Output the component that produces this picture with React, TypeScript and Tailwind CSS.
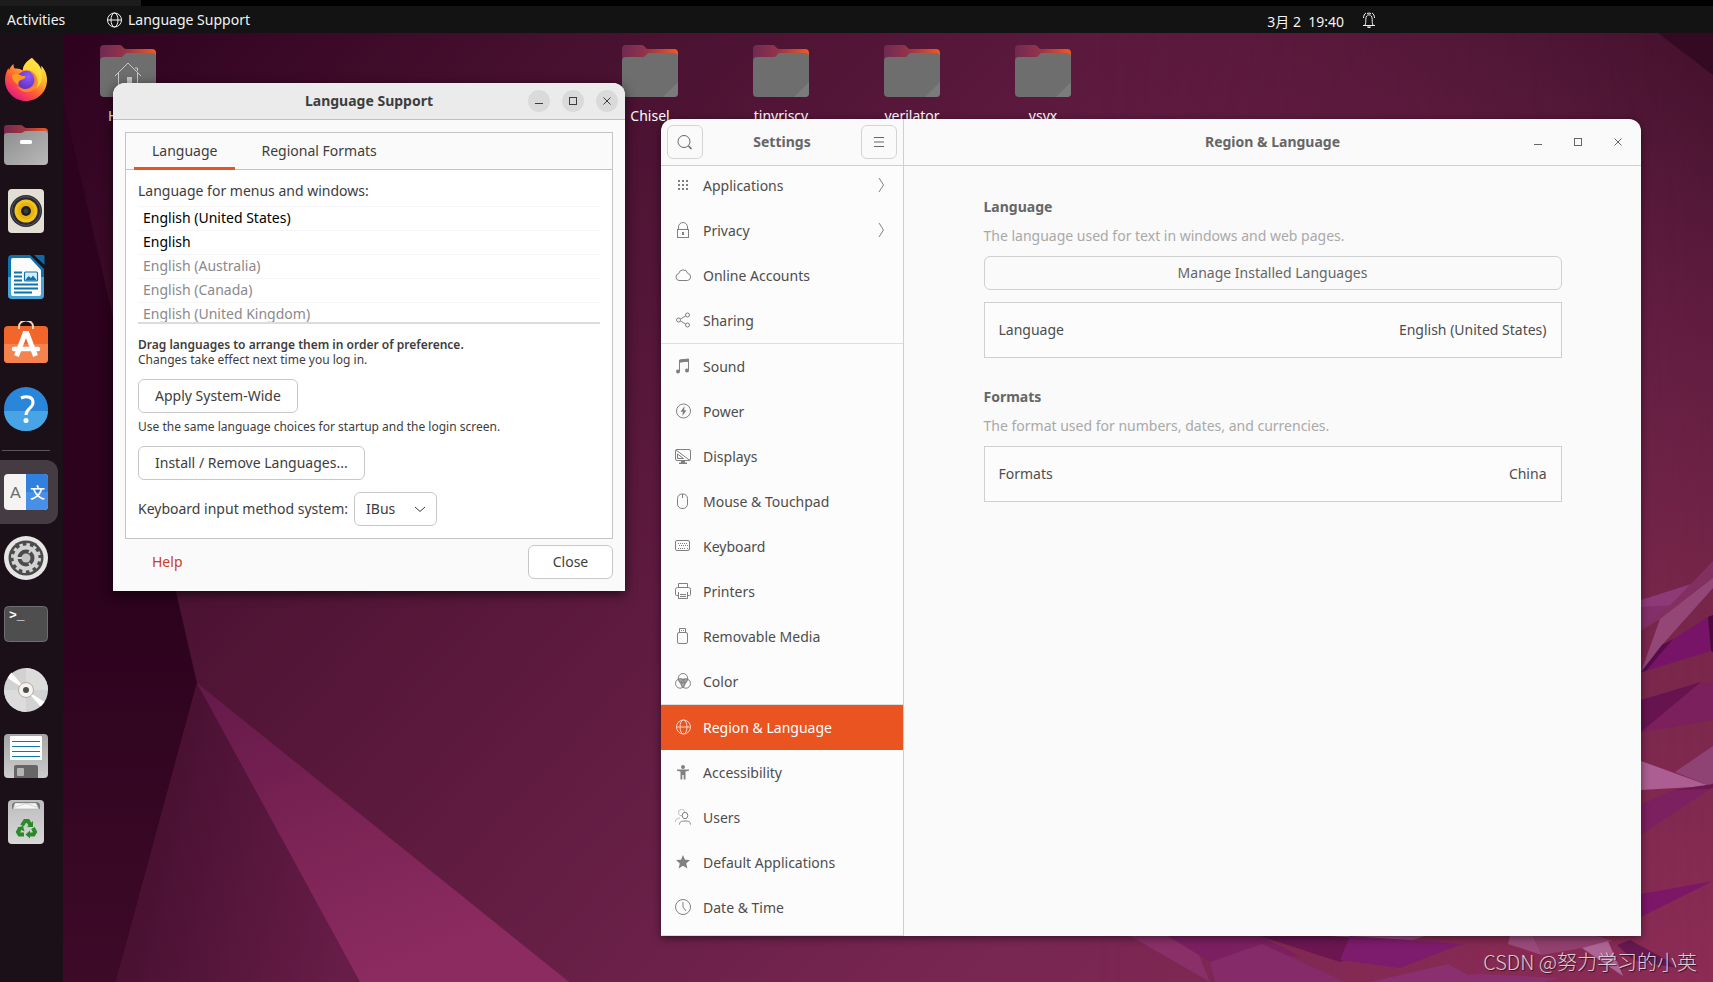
// App.tsx
import React, { useState } from "react";

const fontStack = "font-['Noto_Sans','Noto_Sans_CJK_SC',sans-serif]";

/* ---------- Wallpaper ---------- */

const facets: { points: string; fill: string }[] = [
	{ points: "1658,33 1713,75 1713,33", fill: "#340922" },
	{ points: "1641,600 1691,584 1670,606 1641,608", fill: "#8e3a78" },
	{ points: "1641,607 1672,605 1641,631", fill: "#83306a" },
	{ points: "1713,561 1713,581 1660,619 1641,631 1670,606 1691,584", fill: "#82305f" },
	{ points: "1713,578 1713,588 1662,645 1641,672 1660,619", fill: "#944676" },
	{ points: "1708,617 1711,651 1645,671 1641,672 1667,643", fill: "#781468" },
	{ points: "1641,672 1646,671 1673,639 1662,645", fill: "#560c4c" },
	{ points: "1708,617 1713,615 1713,652 1711,651", fill: "#4b0a3b" },
	{ points: "1641,700 1701,682 1641,733", fill: "#661350" },
	{ points: "1701,682 1713,684 1713,720 1641,732", fill: "#7b1f5d" },
	{ points: "1641,761 1710,786 1641,790", fill: "#ac5e92" },
	{ points: "1713,746 1713,783 1710,786 1675,772", fill: "#8f4374" },
	{ points: "1673,790 1713,784 1713,788 1700,791", fill: "#6a1a50" },
	{ points: "1641,805 1673,790 1710,789 1641,835", fill: "#7d2060" },
	{ points: "1641,894 1713,881 1641,917", fill: "#7c1768" },
	{ points: "1130,936 1168,936 1196,948 1210,982 1172,960", fill: "#8a2f68" },
	{ points: "1168,936 1260,936 1300,956 1210,962", fill: "#7c1f60" },
	{ points: "1210,962 1262,944 1345,982 1215,982", fill: "#862b6a" },
	{ points: "1260,936 1330,936 1400,941 1340,962", fill: "#6b1650" },
	{ points: "1330,936 1425,936 1413,940", fill: "#96497c" },
	{ points: "1350,936 1462,944 1400,968 1340,960", fill: "#7d1c6c" },
	{ points: "1370,982 1448,964 1468,975 1480,974 1560,978 1543,982", fill: "#8a3070" },
	{ points: "1510,936 1533,936 1542,955 1508,944", fill: "#9a4b7c" },
	{ points: "1533,936 1597,936 1613,941 1582,948 1542,955", fill: "#92406e" },
	{ points: "1582,948 1608,941 1623,976", fill: "#ad6595" },
	{ points: "1630,940 1667,960 1677,968 1633,960 1617,945", fill: "#661850" },
];

const Wallpaper: React.FC = () => (
	<svg
		className="absolute inset-0 h-full w-full"
		viewBox="0 0 1713 982"
		preserveAspectRatio="none"
		aria-hidden="true"
	>
		<defs>
			<linearGradient id="base" gradientUnits="userSpaceOnUse" x1="120" y1="0" x2="1300" y2="1100">
				<stop offset="0" stopColor="#2f0320" />
				<stop offset="0.22" stopColor="#47102f" />
				<stop offset="0.5" stopColor="#5f1b40" />
				<stop offset="0.8" stopColor="#782652" />
				<stop offset="1" stopColor="#7e2853" />
			</linearGradient>
			<linearGradient id="right" gradientUnits="userSpaceOnUse" x1="0" y1="33" x2="0" y2="982">
				<stop offset="0" stopColor="#43112c" />
				<stop offset="0.3" stopColor="#5f1c3f" />
				<stop offset="0.6" stopColor="#762649" />
				<stop offset="1" stopColor="#8c2c55" />
			</linearGradient>
			<linearGradient id="fade" x1="0" x2="1" y1="0" y2="0">
				<stop offset="0" stopColor="#000" />
				<stop offset="1" stopColor="#fff" />
			</linearGradient>
			<mask id="rightMask">
				<rect x="1100" y="0" width="613" height="982" fill="url(#fade)" />
			</mask>
			<linearGradient id="ray" x1="0" y1="0" x2="0.5" y2="1">
				<stop offset="0" stopColor="#64194a" />
				<stop offset="0.6" stopColor="#7e2556" />
				<stop offset="1" stopColor="#8c2b60" />
			</linearGradient>
			<linearGradient id="lowLeft" x1="0" y1="0.4" x2="1" y2="0.7">
				<stop offset="0" stopColor="#430e2e" />
				<stop offset="1" stopColor="#671d47" />
			</linearGradient>
			<linearGradient id="dark" x1="0" y1="0" x2="0" y2="1">
				<stop offset="0" stopColor="#2e0220" />
				<stop offset="0.6" stopColor="#2c021d" />
				<stop offset="1" stopColor="#3d0a28" />
			</linearGradient>
		</defs>
		<rect width="1713" height="982" fill="url(#base)" />
		<rect x="1100" width="613" height="982" fill="url(#right)" mask="url(#rightMask)" />
		<polygon points="0,0 40,0 197,683 116,982 0,982" fill="url(#dark)" />
		<polygon points="197,683 360,982 116,982" fill="url(#lowLeft)" />
		<polygon points="197,683 569,982 360,982" fill="url(#ray)" />
		{facets.map((f) => (
			<polygon key={f.points} points={f.points} fill={f.fill} />
		))}
	</svg>
);

/* ---------- Dock icons, all on a 44px grid ---------- */

const FirefoxIcon = () => (
	<svg width="44" height="44" viewBox="0 0 44 44">
		<defs>
			<linearGradient id="ffBody" x1="0.85" y1="0.05" x2="0.2" y2="0.95">
				<stop offset="0" stopColor="#fff44f" />
				<stop offset="0.35" stopColor="#ffb02a" />
				<stop offset="0.65" stopColor="#ff5a36" />
				<stop offset="1" stopColor="#e31587" />
			</linearGradient>
			<radialGradient id="ffGlobe" cx="0.6" cy="0.3" r="0.8">
				<stop offset="0" stopColor="#9059ff" />
				<stop offset="1" stopColor="#5b2bb5" />
			</radialGradient>
		</defs>
		<path
			d="M28 1c2 3 6 5 8 9 .6 1 1 2 1.200 3 .3-1.500.2-3-.2-4.300C41 12 43 18 43 23c0 12-9.500 21-21 21S1 34.500 1 23c0-5 1.500-9 3.500-12 .1 1 .2 1.500.6 2.300C6 10.500 7.500 8.500 9.500 7c0 2 .3 3.500 1.200 4.600 3-.6 6 .2 8 2C19 9 23 3.500 28 1z"
			fill="url(#ffBody)"
		/>
		<circle cx="22.500" cy="23" r="9.500" fill="url(#ffGlobe)" />
		<path d="M8 18c3-2 7-1 9 .5 2 .8 5 .3 4.500 1.700-1 2-4 2-5.500 3.300-1.500 1-2 2.500-1.500 4.500C11 26 7.500 22 8 18z" fill="#ff9a1f" />
		<path d="M24 13c5 0 9 4 10 9 1 7-4 13-11 13-4 0-8-2-10-6 5 4 11 4 15 0 4-4.500 3-11-4-16z" fill="#ff8a2b" opacity="0.85" />
		<path d="M28 1c-5 3-9 7-9 12 6-1 12 2 14 8 1.500 4 1 8-1 11 6-5 8-13 4-22-2-4-6-6-8-9z" fill="#ffdf3d" opacity="0.85" />
	</svg>
);

const FilesIcon = () => (
	<svg width="44" height="44" viewBox="0 0 44 44">
		<defs>
			<linearGradient id="fBack" x1="0" x2="1">
				<stop offset="0" stopColor="#75294f" />
				<stop offset="0.5" stopColor="#a3373f" />
				<stop offset="1" stopColor="#f05a20" />
			</linearGradient>
			<linearGradient id="fFront" x1="0" y1="0" x2="1" y2="1">
				<stop offset="0" stopColor="#8e8e8e" />
				<stop offset="1" stopColor="#b9b9b9" />
			</linearGradient>
		</defs>
		<path d="M0 14V5a3 3 0 0 1 3-3h14c2 0 3 3 5 3h18a4 4 0 0 1 4 4v8H0z" fill="url(#fBack)" />
		<path d="M0 13a3 3 0 0 1 3-3h14c2 0 3-2 5-2h18a4 4 0 0 1 4 4v26a4 4 0 0 1-4 4H4a4 4 0 0 1-4-4z" fill="url(#fFront)" />
		<rect x="16" y="17" width="12" height="4" rx="1.500" fill="#fff" />
	</svg>
);

const RhythmboxIcon = () => (
	<svg width="44" height="44" viewBox="0 0 44 44">
		<rect x="4" y="0" width="36" height="44" rx="4" fill="#e4dfd5" />
		<circle cx="22" cy="22" r="16" fill="#2b2a33" />
		<circle cx="22" cy="22" r="14.500" fill="none" stroke="#55555f" strokeWidth="1" />
		<circle cx="22" cy="22" r="11.500" fill="#f2c31b" />
		<circle cx="22" cy="22" r="8.500" fill="#dda90f" opacity="0.6" />
		<circle cx="22" cy="22" r="5" fill="#1f1f1f" />
		<circle cx="22" cy="22" r="2.500" fill="#3c3c3c" />
	</svg>
);

const WriterIcon = () => (
	<svg width="44" height="44" viewBox="0 0 44 44">
		<path d="M8 0h18l14 14v26a4 4 0 0 1-4 4H8a4 4 0 0 1-4-4V4a4 4 0 0 1 4-4z" fill="#0c73b0" />
		<path d="M4 22h36v18a4 4 0 0 1-4 4H8a4 4 0 0 1-4-4z" fill="#48a3d6" />
		<path d="M9 3h17l11 12v24a2 2 0 0 1-2 2H9a2 2 0 0 1-2-2V5a2 2 0 0 1 2-2z" fill="#fbfbfb" />
		<path d="M30 0h9a1.500 1.500 0 0 1 1.500 1.500V10z" fill="#0d6aa3" />
		<path d="M10 17.500h8M10 21.500h8M10 25.500h8M10 29.500h24M10 33.500h24M10 37.500h18" stroke="#0c73b0" strokeWidth="1.800" />
		<rect x="20.500" y="17" width="13" height="9" rx="1" fill="#d9ecf8" stroke="#0c73b0" strokeWidth="1.200" />
		<path d="M21 25.500l3.500-4.500 2.500 2 2-2.500 4 5z" fill="#0c73b0" />
	</svg>
);

const SoftwareIcon = () => (
	<svg width="44" height="44" viewBox="0 0 44 44">
		<rect x="0" y="5" width="44" height="37" rx="4" fill="#f2662c" />
		<path d="M0 23h44v15a4 4 0 0 1-4 4H4a4 4 0 0 1-4-4z" fill="#f58350" />
		<path d="M15 8V5.500a7 6 0 0 1 14 0V8" fill="none" stroke="#f6d9a8" strokeWidth="2" />
		<path d="M12.500 35L21 12.500h2L31.500 35" fill="none" stroke="#fff" strokeWidth="5" />
		<path d="M10 28h24" stroke="#fff" strokeWidth="4.500" strokeLinecap="round" />
	</svg>
);

const HelpIcon = () => (
	<svg width="44" height="44" viewBox="0 0 44 44">
		<circle cx="22" cy="22" r="22" fill="#2a86d8" />
		<path d="M0 24a22 20 0 0 0 44 0z" fill="#49a4e6" />
		<path d="M17 11c7-3 12-.5 12 4.500 0 6-7 6-7 12.500" fill="none" stroke="#fff" strokeWidth="3" />
		<circle cx="22" cy="33.500" r="2.500" fill="#fff" />
	</svg>
);

const TranslateIcon = () => (
	<svg width="44" height="44" viewBox="0 0 44 44">
		<rect x="0" y="4" width="44" height="36" rx="4" fill="#f5f4f2" />
		<path d="M22 4h18a4 4 0 0 1 4 4v14H22z" fill="#3180e0" />
		<path d="M22 22h22v14a4 4 0 0 1-4 4H22z" fill="#4790e6" />
		<text x="11.500" y="28" fontSize="16" textAnchor="middle" fill="#6d6d6d" fontFamily="Lato, sans-serif">A</text>
		<text x="33.500" y="28" fontSize="15" fontWeight="500" textAnchor="middle" fill="#fff" fontFamily="'Noto Sans CJK SC', sans-serif">文</text>
	</svg>
);

const SettingsIcon = () => (
	<svg width="44" height="44" viewBox="0 0 44 44">
		<circle cx="22" cy="22" r="22" fill="#e6e6e4" />
		<circle cx="22" cy="22" r="17.500" fill="#4b4b4b" />
		<circle cx="22" cy="22" r="13.500" fill="none" stroke="#d3d3d3" strokeWidth="3" strokeDasharray="3.530 3.538" />
		<circle cx="22" cy="22" r="10.500" fill="none" stroke="#d3d3d3" strokeWidth="4" />
		<circle cx="22" cy="22" r="4.500" fill="#c4c4c4" />
		<path d="M12 22h6M25 17l3-5M25 27l3 5" stroke="#d3d3d3" strokeWidth="2" />
	</svg>
);

const TerminalIcon = () => (
	<svg width="44" height="44" viewBox="0 0 44 44">
		<rect x="0.500" y="4.500" width="43" height="35" rx="4" fill="#4e4e4e" stroke="#6e6e6e" />
		<text x="5" y="17" fontSize="13" fontWeight="700" fill="#fff" fontFamily="'Liberation Mono', monospace">&gt;_</text>
	</svg>
);

const DiscIcon = () => (
	<svg width="44" height="44" viewBox="0 0 44 44">
		<circle cx="22" cy="22" r="22" fill="#d2d2d2" />
		<path d="M22 22V0a22 22 0 0 1 22 22z" fill="#dcdcdc" />
		<path d="M22 22V44a22 22 0 0 1-22-22z" fill="#dcdcdc" />
		<path d="M22 22L3.500 10a22 22 0 0 1 4-5.500z" fill="#fff" />
		<path d="M22 22l18.500 12a22 22 0 0 1-4 4.500z" fill="#fff" />
		<circle cx="22" cy="22" r="7.500" fill="#f5f3ef" stroke="#b5aca0" />
		<circle cx="22" cy="22" r="3" fill="#4d4d4d" />
	</svg>
);

const FloppyIcon = () => (
	<svg width="44" height="44" viewBox="0 0 44 44">
		<defs>
			<linearGradient id="flop" x1="0" y1="0" x2="0" y2="1">
				<stop offset="0" stopColor="#a5a5a5" />
				<stop offset="1" stopColor="#cdcdcd" />
			</linearGradient>
		</defs>
		<rect width="44" height="44" rx="4" fill="url(#flop)" />
		<rect x="6" y="2" width="32" height="24" rx="1" fill="#fff" />
		<path d="M8 7.500h28M8 12.500h28M8 17.500h28M8 22.500h28" stroke="#0b7aa8" strokeWidth="1.200" />
		<path d="M10 33a2 2 0 0 1 2-2h20a2 2 0 0 1 2 2v11H10z" fill="#666" />
		<rect x="13" y="34" width="7" height="8" rx="1" fill="#b4b4b4" />
	</svg>
);

const TrashIcon = () => (
	<svg width="44" height="44" viewBox="0 0 44 44">
		<defs>
			<linearGradient id="bin" x1="0" y1="0" x2="0" y2="1">
				<stop offset="0" stopColor="#bdbdbd" />
				<stop offset="1" stopColor="#d8d8d8" />
			</linearGradient>
		</defs>
		<rect x="4" width="36" height="44" rx="4" fill="url(#bin)" />
		<path d="M8 9V6a4 4 0 0 1 4-4h20a4 4 0 0 1 4 4v3z" fill="#777" />
		<path d="M9 9l2-6h21l3 6z" fill="#f7f7f7" stroke="#aaa" strokeWidth="0.600" />
		<path d="M10 7.500l12-4 12 4" fill="none" stroke="#bbb" strokeWidth="0.600" />
		<g fill="none" stroke="#2a8a26" strokeWidth="4">
			<path d="M18 25.500l3-4.500h3l2.500 4" />
			<path d="M29 28l2 4-1.500 2.500H24" />
			<path d="M20 34.500h-4.500L14 32l2-3.500" />
		</g>
		<path d="M29 21v6h-6zM26 30.500v8l-4.500-4zM13 27.500l6-1.500 1.500 5.500z" fill="#2a8a26" />
	</svg>
);

interface DockItem {
	name: string;
	Icon: React.FC;
	active?: boolean;
}

const pinnedApps: DockItem[] = [
	{ name: "Firefox", Icon: FirefoxIcon },
	{ name: "Files", Icon: FilesIcon },
	{ name: "Rhythmbox", Icon: RhythmboxIcon },
	{ name: "LibreOffice Writer", Icon: WriterIcon },
	{ name: "Ubuntu Software", Icon: SoftwareIcon },
	{ name: "Help", Icon: HelpIcon },
];

const runningApps: DockItem[] = [
	{ name: "Language Support", Icon: TranslateIcon, active: true },
	{ name: "Settings", Icon: SettingsIcon },
	{ name: "Terminal", Icon: TerminalIcon },
	{ name: "Disc", Icon: DiscIcon },
	{ name: "Floppy Disk", Icon: FloppyIcon },
	{ name: "Trash", Icon: TrashIcon },
];

const DockButton: React.FC<DockItem> = ({ name, Icon, active }) => (
	<button
		aria-label={name}
		className={`flex h-16 w-[58px] shrink-0 items-center rounded-r-xl pl-1 ${active ? "bg-[#453b42]" : ""}`}
	>
		<Icon />
	</button>
);

const Dock: React.FC = () => (
	<nav aria-label="Dock" className="relative flex w-[63px] shrink-0 flex-col gap-0.5 bg-[#1b1017] pt-3.5">
		{pinnedApps.map((app) => (
			<DockButton key={app.name} {...app} />
		))}
		<div className="flex h-[15px] shrink-0 items-center pl-0.5">
			<div className="h-px w-12 bg-[#5d555a]" />
		</div>
		{runningApps.map((app) => (
			<DockButton key={app.name} {...app} />
		))}
	</nav>
);

/* ---------- Symbolic icons, 16px grid ---------- */

const Sym: React.FC<{ children: React.ReactNode; className?: string }> = ({ children, className = "" }) => (
	<svg
		width="16"
		height="16"
		viewBox="0 0 16 16"
		fill="none"
		stroke="currentColor"
		strokeWidth="1"
		aria-hidden="true"
		className={`shrink-0 ${className}`}
	>
		{children}
	</svg>
);

const globe = (
	<>
		<circle cx="8.500" cy="8" r="7" />
		<ellipse cx="8.500" cy="8" rx="3.500" ry="7" />
		<path d="M1.500 8h14" />
	</>
);

const icons: Record<string, React.ReactNode> = {
	Applications: (
		<g fill="currentColor" stroke="none">
			{[3, 7, 11].map((y) =>
				[3, 7, 11].map((x) => <rect key={`${x}-${y}`} x={x} y={y} width="2" height="2" />)
			)}
		</g>
	),
	Privacy: (
		<>
			<rect x="2.500" y="7.500" width="11" height="8" />
			<path d="M3.500 7.500V5a4.500 4.500 0 0 1 9 0v2.500" />
			<rect x="7" y="10" width="2" height="3" fill="currentColor" stroke="none" />
		</>
	),
	"Online Accounts": <path d="M4 13.500a3.500 3.500 0 0 1-.3-6.900 4.600 4.600 0 0 1 9-.2A3.600 3.600 0 0 1 12.500 13.500z" />,
	Sharing: (
		<>
			<circle cx="3.500" cy="8" r="2" />
			<circle cx="12.500" cy="3" r="2" />
			<circle cx="12.500" cy="13" r="2" />
			<path d="M5.300 7l5.400-3M5.300 9l5.400 3" />
		</>
	),
	Sound: (
		<>
			<path d="M4.500 13V2.500l9-1V12M4.500 4l9-1" />
			<path d="M4.500 2l9-1v2l-9 1z" fill="currentColor" />
			<circle cx="3" cy="13.500" r="2" fill="currentColor" stroke="none" />
			<circle cx="12" cy="12.500" r="2" fill="currentColor" stroke="none" />
		</>
	),
	Power: (
		<>
			<circle cx="8.500" cy="8" r="7" />
			<path d="M9.500 3L5.500 8.800h2.300L7.500 13l4-5.800H9.200z" fill="currentColor" stroke="none" />
		</>
	),
	Displays: (
		<>
			<rect x="0.500" y="1.500" width="15" height="11" rx="1.500" />
			<path d="M1 2l14 10.500M2.500 6v4.500h6z" />
			<path d="M6 13h4v1.500h2v1.500H4v-1.500h2z" fill="currentColor" stroke="none" />
		</>
	),
	"Mouse & Touchpad": (
		<>
			<rect x="2.500" y="1" width="10" height="14.500" rx="4.500" />
			<path d="M7.500 1v4" />
		</>
	),
	Keyboard: (
		<>
			<rect x="0.500" y="2.500" width="14" height="10" rx="1.500" />
			<path d="M3 5.500h10M4 7.500h9M3 10.500h1M5 10.500h6M12 10.500h1" strokeDasharray="1 1" />
		</>
	),
	Printers: (
		<>
			<path d="M3.500 4.500v-4h9v4M3 12.500H1.500a1 1 0 0 1-1-1v-5a2 2 0 0 1 2-2h11a2 2 0 0 1 2 2v5a1 1 0 0 1-1 1H13" />
			<path d="M3.500 9v6.500h9V9M5 11.500h6M5 13.500h6" />
		</>
	),
	"Removable Media": (
		<>
			<rect x="2.500" y="4.500" width="10" height="11" rx="1.500" />
			<path d="M4.500 4V.5h6V4M6 2.500h1M8 2.500h1" />
		</>
	),
	Color: (
		<>
			<path d="M3 5.500h10c0 3-1.500 4.500-2.500 5.500-.5 2-1.500 3-2.500 4-1-1-2-2-2.500-4C4.500 10 3 8.500 3 5.500z" fill="currentColor" opacity="0.700" stroke="none" />
			<circle cx="8" cy="5.200" r="4.700" />
			<circle cx="5.200" cy="10.500" r="4.700" />
			<circle cx="10.800" cy="10.500" r="4.700" />
		</>
	),
	"Region & Language": globe,
	Accessibility: (
		<g fill="currentColor" stroke="none">
			<circle cx="8" cy="3" r="2" />
			<path d="M2 5.500h12v1.200l-3.500.8V15.500H8.700V11H7.300v4.500H5.500V7.500L2 6.700z" />
		</g>
	),
	Users: (
		<>
			<g opacity="0.500">
				<path d="M7.500 6.500A3 3.200 0 1 1 9.500 3M.5 13c0-2.500 1.500-4 4.500-4" />
			</g>
			<ellipse cx="10" cy="6.500" rx="2.800" ry="3.200" />
			<path d="M4.500 15.500c0-2.500 1.500-3.500 5.500-3.500s5.500 1 5.500 3.500" />
		</>
	),
	"Default Applications": (
		<path d="M8 1l2 4.700 5 .4-3.800 3.300 1.200 5L8 11.700 3.600 14.400l1.200-5L1 6.100l5-.4z" fill="currentColor" stroke="none" />
	),
	"Date & Time": (
		<>
			<circle cx="8" cy="8" r="7.500" />
			<path d="M8 3v5l3 4" />
		</>
	),
};

const MinimizeGlyph = () => (
	<Sym>
		<path d="M4 10.500h8" />
	</Sym>
);
const MaximizeGlyph = () => (
	<Sym>
		<rect x="4.500" y="4.500" width="7" height="7" />
	</Sym>
);
const CloseGlyph = () => (
	<Sym>
		<path d="M4.500 4.500l7 7M11.500 4.500l-7 7" />
	</Sym>
);

const windowControls = [
	{ label: "Minimize", Glyph: MinimizeGlyph },
	{ label: "Maximize", Glyph: MaximizeGlyph },
	{ label: "Close window", Glyph: CloseGlyph },
];

/* ---------- Top bar ---------- */

const TopBar: React.FC = () => (
	<header className="relative z-10 shrink-0">
		<div className="h-1.5 bg-black">
			<div className="h-full w-[141px] bg-[#1c1c1c]" />
		</div>
		<div className="flex h-[27px] items-center bg-[#131313] pl-[7px] text-sm text-[#f2f2f2]">
			<button className="w-[99px] text-left">Activities</button>
			<button className="flex items-center gap-1.5">
				<Sym>{globe}</Sym>
				Language Support
			</button>
			<button className="mr-[17px] ml-auto pt-1 whitespace-pre">{"3月 2  19:40"}</button>
			<button aria-label="Notifications" className="mr-[336px]">
				<Sym>
					<path d="M2 13.500h12M4 13c.8-1.500.8-3 .8-5.500C4.800 4.500 6 2.800 8 2.800s3.200 1.700 3.200 4.700c0 2.500 0 4 .8 5.500M2.500 6c0-2.500 1-4 2.500-5M13.500 6c0-2.500-1-4-2.500-5M6 1.500a4 3 0 0 1 4 0" />
					<path d="M6 14.500h4a2 1.500 0 0 1-4 0z" fill="currentColor" stroke="none" />
				</Sym>
			</button>
		</div>
	</header>
);

/* ---------- Desktop folders ---------- */

const DesktopFolder: React.FC<{ name: string; home?: boolean; className: string }> = ({ name, home, className }) => (
	<div className={`absolute top-3 flex w-24 flex-col items-center gap-[9px] text-sm text-white ${className}`}>
		<svg width="56" height="52" viewBox="0 0 56 52" className="shrink-0" aria-hidden="true">
			<defs>
				<linearGradient id="deskBack" x1="0" x2="1">
					<stop offset="0" stopColor="#6f2a52" />
					<stop offset="0.450" stopColor="#95344a" />
					<stop offset="1" stopColor="#f05a22" />
				</linearGradient>
			</defs>
			<path d="M0 16V4a4 4 0 0 1 4-4h16c2.500 0 3.500 4 6 4h26a4 4 0 0 1 4 4v10H0z" fill="url(#deskBack)" />
			<path d="M0 16a4 4 0 0 1 4-4h18l4-4h26a4 4 0 0 1 4 4v36a4 4 0 0 1-4 4H4a4 4 0 0 1-4-4z" fill="#6e6e6e" />
			<path d="M56 37v11a4 4 0 0 1-4 4H41z" fill="#7b7b7b" />
			{home && (
				<path d="M15 31l13-13 13 13M18.500 28v16M37.500 28v16M35 23h2.500v3" fill="none" stroke="#c9c9c9" />
			)}
			{home && <rect x="27" y="32" width="5" height="10" fill="#c9c9c9" />}
		</svg>
		<span>{name}</span>
	</div>
);

/* ---------- Language Support window ---------- */

const languages = [
	{ name: "English (United States)", enabled: true },
	{ name: "English", enabled: true },
	{ name: "English (Australia)", enabled: false },
	{ name: "English (Canada)", enabled: false },
	{ name: "English (United Kingdom)", enabled: false },
];

const LanguageSupport: React.FC = () => {
	const [tab, setTab] = useState("Language");

	return (
		<section
			aria-label="Language Support"
			className="absolute top-[50px] left-[50px] w-[512px] rounded-t-xl bg-[#fafafa] text-sm text-[#3d3d3d] shadow-[0_3px_12px_rgba(0,0,0,0.65)]"
		>
			<div className="relative flex h-[37px] items-center justify-end gap-3 rounded-t-xl border-b border-[#c0bfbf] bg-[#ebebeb] pr-[7px]">
				<h1 className="absolute inset-x-0 text-center font-bold">Language Support</h1>
				{windowControls.map(({ label, Glyph }) => (
					<button
						key={label}
						aria-label={label}
						className="relative flex size-[22px] items-center justify-center rounded-full bg-[#dadada]"
					>
						<Glyph />
					</button>
				))}
			</div>

			<div className="px-3 pt-3 pb-3">
				<div className="border border-[#c4c4c4] bg-white">
					<div role="tablist" className="flex h-[37px] border-b border-[#c4c4c4] bg-[#fafafa] px-2">
						{["Language", "Regional Formats"].map((name) => (
							<button
								key={name}
								role="tab"
								aria-selected={tab === name}
								onClick={() => setTab(name)}
								className={`-mb-px border-b-3 px-[18px] pt-0.5 not-first:ml-2 ${
									tab === name ? "border-[#e95420]" : "border-transparent"
								}`}
							>
								{name}
							</button>
						))}
					</div>

					<div className="flex flex-col items-start px-3 pt-[11px] pb-3">
						<p className="leading-5">Language for menus and windows:</p>
						<ul className="mt-[5px] h-[118px] w-full overflow-hidden border-b-2 border-[#dcdcdc]">
							{languages.map(({ name, enabled }) => (
								<li
									key={name}
									className={`h-6 border-t border-[#f5f5f5] pl-[5px] leading-[22px] ${enabled ? "text-black" : "text-[#8a8a8a]"}`}
								>
									{name}
								</li>
							))}
						</ul>
						<p className="mt-[13px] text-xs leading-[15px] font-semibold">
							Drag languages to arrange them in order of preference.
						</p>
						<p className="text-xs leading-[15px]">Changes take effect next time you log in.</p>
						<button className="mt-3 h-[34px] rounded-md border border-[#c8c8c8] bg-white px-4">
							Apply System-Wide
						</button>
						<p className="mt-1.5 text-xs leading-[15px]">
							Use the same language choices for startup and the login screen.
						</p>
						<button className="mt-3 h-[34px] rounded-md border border-[#c8c8c8] bg-white px-4">
							Install / Remove Languages...
						</button>
						<div className="mt-3 flex items-center gap-1.5">
							<label htmlFor="input-method">Keyboard input method system:</label>
							<div className="relative">
								<select
									id="input-method"
									defaultValue="IBus"
									className="h-[34px] w-[83px] appearance-none rounded-md border border-[#c8c8c8] bg-white pl-[11px]"
								>
									<option>IBus</option>
								</select>
								<Sym className="pointer-events-none absolute top-[9px] right-[9px]">
									<path d="M3 6l5 4.500L13 6" />
								</Sym>
							</div>
						</div>
					</div>
				</div>

				<div className="mt-1.5 flex items-center justify-between pl-[27px]">
					<a href="#help" className="text-[#c7401b]">
						Help
					</a>
					<button className="h-[34px] w-[85px] rounded-md border border-[#c8c8c8] bg-white">Close</button>
				</div>
			</div>
		</section>
	);
};

/* ---------- Settings window ---------- */

const panels = [
	{ name: "Applications", submenu: true },
	{ name: "Privacy", submenu: true },
	{ name: "Online Accounts" },
	{ name: "Sharing", divider: true },
	{ name: "Sound" },
	{ name: "Power" },
	{ name: "Displays" },
	{ name: "Mouse & Touchpad" },
	{ name: "Keyboard" },
	{ name: "Printers" },
	{ name: "Removable Media" },
	{ name: "Color", divider: true },
	{ name: "Region & Language" },
	{ name: "Accessibility" },
	{ name: "Users" },
	{ name: "Default Applications" },
	{ name: "Date & Time" },
];

const SettingRow: React.FC<{ label: string; value: string }> = ({ label, value }) => (
	<button className="flex h-14 w-full items-center justify-between border border-[#d0d0d0] bg-[#fcfcfc] px-3.5 text-[#4d4d4d]">
		<span>{label}</span>
		<span>{value}</span>
	</button>
);

const Settings: React.FC = () => {
	const [selected, setSelected] = useState("Region & Language");

	return (
		<section
			aria-label="Settings"
			className="absolute top-[86px] right-[72px] bottom-[46px] left-[598px] flex overflow-hidden rounded-t-xl bg-[#fafafa] text-sm text-[#666] shadow-[0_2px_8px_rgba(0,0,0,0.5)]"
		>
			<aside className="flex w-[243px] shrink-0 flex-col border-r border-[#cfcfcf]">
				<div className="flex h-[47px] shrink-0 items-center justify-between border-b border-[#cfcfcf] px-1.5">
					<button
						aria-label="Search"
						className="flex h-[34px] w-9 items-center justify-center rounded-md border border-[#d4d4d4]"
					>
						<Sym>
							<circle cx="7" cy="7.500" r="6" />
							<path d="M11.500 12l3 3" strokeWidth="1.500" />
						</Sym>
					</button>
					<h2 className="font-bold">Settings</h2>
					<button
						aria-label="Menu"
						className="flex h-[34px] w-9 items-center justify-center rounded-md border border-[#d4d4d4]"
					>
						<Sym>
							<path d="M3 3.500h10M3 8h10M3 12.500h10" />
						</Sym>
					</button>
				</div>
				<nav className="flex min-h-0 flex-1 flex-col justify-end overflow-hidden border-b border-[#dcdcdc] bg-[#fcfcfc] pb-[5px]">
					{panels.map(({ name, submenu, divider }) => (
						<button
							key={name}
							onClick={() => setSelected(name)}
							className={`flex shrink-0 items-center gap-3 px-3.5 text-left ${
								divider ? "h-[46px] border-b border-[#dedede]" : "h-[45px]"
							} ${selected === name ? "bg-[#e95420] text-white" : "text-[#4d4d4d]"}`}
						>
							<Sym className={`mb-0.5 ${selected === name ? "text-[#fbd3c5]" : "text-[#808080]"}`}>
								{icons[name]}
							</Sym>
							{name}
							{submenu && (
								<Sym className="mb-0.5 ml-auto text-[#808080]">
									<path d="M6 1l4.500 7L6 15" />
								</Sym>
							)}
						</button>
					))}
				</nav>
			</aside>

			<main className="flex min-w-0 flex-1 flex-col">
				<div className="relative flex h-[47px] shrink-0 items-center justify-end gap-6 border-b border-[#cfcfcf] pr-[15px]">
					<h2 className="absolute inset-x-0 text-center font-bold">Region & Language</h2>
					{windowControls.map(({ label, Glyph }) => (
						<button key={label} aria-label={label} className="relative">
							<Glyph />
						</button>
					))}
				</div>
				<div className="mx-auto w-full max-w-[578px] pt-[31px] leading-5">
					<h3 className="font-bold">Language</h3>
					<p className="mt-[9px] text-[#a9a9a9]">The language used for text in windows and web pages.</p>
					<button className="mt-2.5 h-[34px] w-full rounded-md border border-[#d0d0d0]">
						Manage Installed Languages
					</button>
					<div className="mt-3">
						<SettingRow label="Language" value="English (United States)" />
					</div>
					<h3 className="mt-[29px] font-bold">Formats</h3>
					<p className="mt-[9px] text-[#a9a9a9]">The format used for numbers, dates, and currencies.</p>
					<div className="mt-2.5">
						<SettingRow label="Formats" value="China" />
					</div>
				</div>
			</main>
		</section>
	);
};

const App: React.FC = () => (
	<div className={`relative flex h-screen flex-col overflow-hidden bg-[#2f0320] ${fontStack}`}>
		<Wallpaper />
		<TopBar />
		<div className="flex min-h-0 flex-1">
			<Dock />
			<div className="relative flex-1">
				<DesktopFolder name="Home" home className="left-[17px]" />
				<DesktopFolder name="Chisel" className="left-[539px]" />
				<DesktopFolder name="tinyriscv" className="left-[670px]" />
				<DesktopFolder name="verilator" className="left-[801px]" />
				<DesktopFolder name="vsyx" className="left-[932px]" />
				<Settings />
				<LanguageSupport />
				<p className="absolute right-4 bottom-1.5 font-['Noto_Sans_CJK_SC',sans-serif] text-xl font-light text-[#dccbd5] [text-shadow:1px_1px_1px_rgba(0,0,0,0.6)]">
					CSDN @努力学习的小英
				</p>
			</div>
		</div>
	</div>
);

export default App;
